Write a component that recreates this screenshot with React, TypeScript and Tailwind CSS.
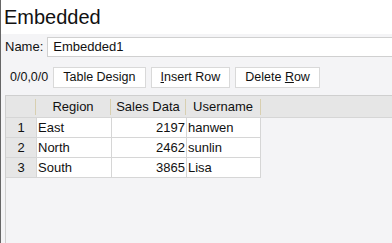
import React from 'react';

const rows = [
  { region: 'East', sales: 2197, user: 'hanwen' },
  { region: 'North', sales: 2462, user: 'sunlin' },
  { region: 'South', sales: 3865, user: 'Lisa' },
];

const Btn: React.FC<{ children: React.ReactNode }> = ({ children }) => (
  <button className="h-[21px] px-[9px] bg-white border border-[#d9d9d9] text-[12.5px] leading-none text-[#111]">
    {children}
  </button>
);

export default function App() {
  return (
    <div
      className="w-[392px] h-[243px] overflow-hidden bg-[#f4f4f6] border-l border-[#666] flex flex-col text-[#111]"
      style={{ fontFamily: '"Liberation Sans", Arial, sans-serif' }}
    >
      {/* title */}
      <div className="h-[34px] bg-white flex items-center pl-[3px] text-[20px] leading-none pb-[1px]">
        Embedded
      </div>

      {/* name row */}
      <div className="h-[26px] flex items-center pl-[4px] gap-[4px] text-[13px]">
        <span>Name:</span>
        <div className="flex-1 h-[20px] bg-white border border-[#d0d0d0] border-r-0 flex items-center pl-[5px]">
          Embedded1
        </div>
      </div>

      {/* toolbar */}
      <div className="h-[35px] flex items-center pl-[9px] gap-[5px] text-[12.5px]">
        <span>0/0,0/0</span>
        <Btn>Table Design</Btn>
        <Btn>
          <u>I</u>nsert Row
        </Btn>
        <Btn>
          Delete <u>R</u>ow
        </Btn>
      </div>

      {/* grid */}
      <div className="flex-1 ml-[4px] border-l border-t border-[#cfcfcf] bg-[#f4f4f6] text-[13px]">
        <div className="flex h-[22px] bg-[#e6e6e6] border-b border-[#d6d6d6]">
          <div className="w-[30px] flex items-center justify-end">
            <span className="w-px h-[16px] bg-[#d8cfb0]" />
          </div>
          <div className="w-[75px] flex items-center">
            <span className="flex-1 text-center">Region</span>
            <span className="w-px h-[16px] bg-[#d8cfb0]" />
          </div>
          <div className="w-[75px] flex items-center">
            <span className="flex-1 text-center">Sales Data</span>
            <span className="w-px h-[16px] bg-[#d8cfb0]" />
          </div>
          <div className="w-[75px] flex items-center">
            <span className="flex-1 text-center">Username</span>
            <span className="w-px h-[16px] bg-[#d8cfb0]" />
          </div>
        </div>
        {rows.map((r, i) => (
          <div key={i} className="flex h-[20px]">
            <div className="w-[30px] bg-[#e6e6e6] border-b border-[#d6d6d6] flex items-center justify-center">
              {i + 1}
            </div>
            <div className="w-[75px] bg-white border-b border-l border-[#d6d6d6] flex items-center pl-[1px]">
              {r.region}
            </div>
            <div className="w-[75px] bg-white border-b border-l border-[#d6d6d6] flex items-center justify-end pr-[1px]">
              {r.sales}
            </div>
            <div className="w-[75px] bg-white border-b border-l border-r border-[#d6d6d6] flex items-center pl-[1px]">
              {r.user}
            </div>
          </div>
        ))}
      </div>
    </div>
  );
}
